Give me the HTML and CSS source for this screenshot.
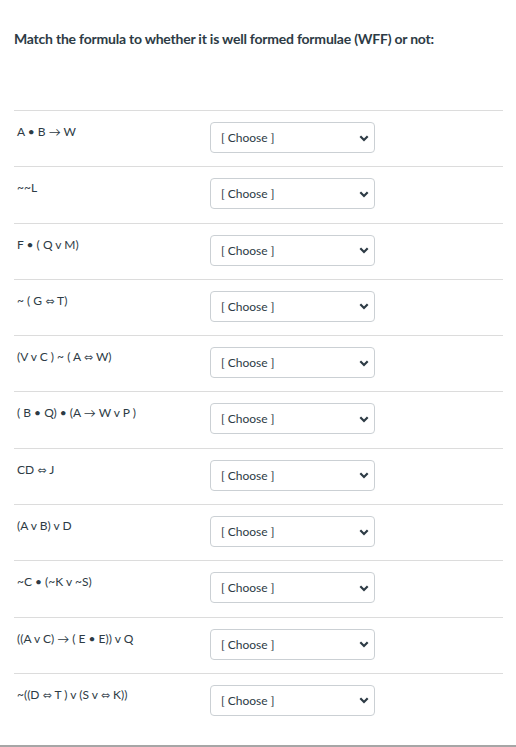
FILE: index.html
```html
<!DOCTYPE html>
<html>
<head>
<meta charset="utf-8">
<link rel="stylesheet" href="styles.css">
</head>
<body>
<div class="page">
  <div class="question">
    <p class="prompt">Match the formula to whether it is well formed formulae (WFF) or not:</p>
    <div class="rows">
      <div class="row"><div class="formula">A • B → W</div><div class="select"><span>[ Choose ]</span><svg class="chev" width="10" height="7" viewBox="0 0 10 7"><path d="M1.3 1.3 L5 5 L8.7 1.3" fill="none" stroke="#2d3b45" stroke-width="2.2"/></svg></div></div>
      <div class="row"><div class="formula">~~L</div><div class="select"><span>[ Choose ]</span><svg class="chev" width="10" height="7" viewBox="0 0 10 7"><path d="M1.3 1.3 L5 5 L8.7 1.3" fill="none" stroke="#2d3b45" stroke-width="2.2"/></svg></div></div>
      <div class="row"><div class="formula">F • ( Q v M)</div><div class="select"><span>[ Choose ]</span><svg class="chev" width="10" height="7" viewBox="0 0 10 7"><path d="M1.3 1.3 L5 5 L8.7 1.3" fill="none" stroke="#2d3b45" stroke-width="2.2"/></svg></div></div>
      <div class="row"><div class="formula">~ ( G <span class="iff">⇔</span> T)</div><div class="select"><span>[ Choose ]</span><svg class="chev" width="10" height="7" viewBox="0 0 10 7"><path d="M1.3 1.3 L5 5 L8.7 1.3" fill="none" stroke="#2d3b45" stroke-width="2.2"/></svg></div></div>
      <div class="row"><div class="formula">(V v C ) ~ ( A <span class="iff">⇔</span> W)</div><div class="select"><span>[ Choose ]</span><svg class="chev" width="10" height="7" viewBox="0 0 10 7"><path d="M1.3 1.3 L5 5 L8.7 1.3" fill="none" stroke="#2d3b45" stroke-width="2.2"/></svg></div></div>
      <div class="row"><div class="formula">( B • Q) • (A → W v P )</div><div class="select"><span>[ Choose ]</span><svg class="chev" width="10" height="7" viewBox="0 0 10 7"><path d="M1.3 1.3 L5 5 L8.7 1.3" fill="none" stroke="#2d3b45" stroke-width="2.2"/></svg></div></div>
      <div class="row"><div class="formula">CD <span class="iff">⇔</span> J</div><div class="select"><span>[ Choose ]</span><svg class="chev" width="10" height="7" viewBox="0 0 10 7"><path d="M1.3 1.3 L5 5 L8.7 1.3" fill="none" stroke="#2d3b45" stroke-width="2.2"/></svg></div></div>
      <div class="row"><div class="formula">(A v B) v D</div><div class="select"><span>[ Choose ]</span><svg class="chev" width="10" height="7" viewBox="0 0 10 7"><path d="M1.3 1.3 L5 5 L8.7 1.3" fill="none" stroke="#2d3b45" stroke-width="2.2"/></svg></div></div>
      <div class="row"><div class="formula">~C • (~K v ~S)</div><div class="select"><span>[ Choose ]</span><svg class="chev" width="10" height="7" viewBox="0 0 10 7"><path d="M1.3 1.3 L5 5 L8.7 1.3" fill="none" stroke="#2d3b45" stroke-width="2.2"/></svg></div></div>
      <div class="row"><div class="formula">((A v C) → ( E • E)) v Q</div><div class="select"><span>[ Choose ]</span><svg class="chev" width="10" height="7" viewBox="0 0 10 7"><path d="M1.3 1.3 L5 5 L8.7 1.3" fill="none" stroke="#2d3b45" stroke-width="2.2"/></svg></div></div>
      <div class="row"><div class="formula">~((D <span class="iff">⇔</span> T ) v (S v <span class="iff">⇔</span> K))</div><div class="select"><span>[ Choose ]</span><svg class="chev" width="10" height="7" viewBox="0 0 10 7"><path d="M1.3 1.3 L5 5 L8.7 1.3" fill="none" stroke="#2d3b45" stroke-width="2.2"/></svg></div></div>
    </div>
  </div>
</div>
</body>
</html>
```
FILE: styles.css
```css
html, body {
  margin: 0;
  padding: 0;
  background: #ffffff;
}
body {
  font-family: Lato, "DejaVu Sans", "Liberation Sans", sans-serif;
  color: #2d3b45;
  width: 516px;
  height: 747px;
  overflow: hidden;
}
.page {
  height: 745px;
  border-bottom: 2px solid #a6a6a6;
}
.question {
  padding: 0 13px 0 14px;
}
.prompt {
  margin: 0;
  padding-top: 28px;
  height: 110px;
  box-sizing: border-box;
  font-size: 14px;
  font-weight: 700;
  line-height: 21px;
  letter-spacing: -0.22px;
}
.row {
  display: flex;
  align-items: flex-start;
  border-top: 1px solid #dcdcdc;
  height: 56.3px;
  box-sizing: border-box;
  padding-top: 11px;
}
.formula {
  width: 193px;
  padding-left: 3px;
  font-size: 12px;
  line-height: 18px;
  padding-top: 1px;
}
.iff {
  font-family: "DejaVu Sans", sans-serif;
  font-size: 11px;
  font-weight: 400;
  line-height: 1;
  color: #4a5660;
}
.select {
  width: 165px;
  height: 31px;
  box-sizing: border-box;
  border: 1px solid #cbd0d4;
  border-radius: 4px;
  display: flex;
  align-items: center;
  justify-content: space-between;
  padding: 0 5px 0 10px;
  font-size: 12px;
}
.chev {
  display: block;
  margin-top: 1px;
}
```
